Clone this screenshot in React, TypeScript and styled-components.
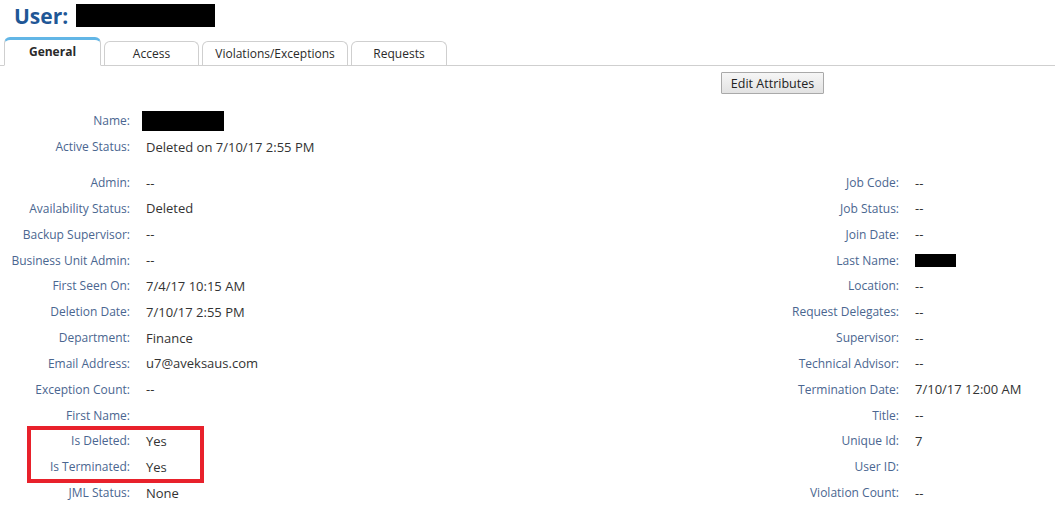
import React from 'react'
import styled, { createGlobalStyle } from 'styled-components'

const GlobalStyle = createGlobalStyle`
  html, body {
    margin: 0;
    padding: 0;
    background: #fff;
  }
  body {
    font-family: "Open Sans", "Noto Sans", sans-serif;
    font-size: 12px;
    color: #333;
  }
`

const Page = styled.div`
  width: 1055px;
  height: 511px;
  overflow: hidden;
`

const TitleRow = styled.div`
  display: flex;
  align-items: center;
  height: 32px;
  padding-left: 14px;
`

const Title = styled.h1`
  margin: 0;
  font-size: 21px;
  font-weight: 700;
  color: #1f5796;
  line-height: 32px;
`

const Redacted = styled.span<{ w: number; h: number; shift?: number }>`
  display: inline-block;
  width: ${(p) => p.w}px;
  height: ${(p) => p.h}px;
  margin-left: ${(p) => p.shift ?? 0}px;
  background: #000;
  vertical-align: middle;
`

const TitleRedact = styled(Redacted)`
  margin-left: 8px;
  margin-top: -1px;
`

const TabBar = styled.div`
  display: flex;
  align-items: flex-end;
  gap: 3px;
  height: 29px;
  margin-top: 4px;
  padding-left: 4px;
  border-bottom: 1px solid #cfcfcf;
`

const Tab = styled.div<{ active?: boolean; w: number }>`
  box-sizing: border-box;
  width: ${(p) => p.w}px;
  height: ${(p) => (p.active ? 29 : 24)}px;
  margin-bottom: ${(p) => (p.active ? -1 : 0)}px;
  display: flex;
  align-items: center;
  justify-content: center;
  border: 1px solid #cfcfcf;
  border-bottom: ${(p) => (p.active ? '1px solid #fff' : 'none')};
  border-top: ${(p) => (p.active ? '3px solid #62b6e6' : '1px solid #cfcfcf')};
  border-radius: 6px 6px 0 0;
  background: #fff;
  font-size: 12px;
  font-weight: ${(p) => (p.active ? 700 : 400)};
  color: #2a2a2a;
  padding-bottom: ${(p) => (p.active ? 3 : 0)}px;
`

const Toolbar = styled.div`
  display: flex;
  padding: 6px 0 0 721px;
  height: 22px;
`

const Button = styled.button`
  box-sizing: border-box;
  width: 103px;
  height: 22px;
  padding: 0;
  border: 1px solid #a9a9a9;
  border-radius: 1px;
  background: linear-gradient(#f6f6f6, #e2e2e2);
  font-family: "Open Sans", "Noto Sans", sans-serif;
  font-size: 12.5px;
  color: #222;
`

const Section = styled.div<{ top: number }>`
  margin-top: ${(p) => p.top}px;
`

const Columns = styled.div`
  display: grid;
  grid-template-columns: 769px 1fr;
`

const Column = styled.div`
  display: flex;
  flex-direction: column;
`

const Row = styled.div`
  display: flex;
  align-items: center;
  height: 25.83px;
`

const Label = styled.div`
  width: 130px;
  text-align: right;
  color: #4a6690;
  white-space: nowrap;
`

const Value = styled.div`
  margin-left: 16px;
  font-size: 13px;
  color: #333;
  white-space: nowrap;
  display: flex;
  align-items: center;
`

const Highlight = styled.div`
  position: relative;
  &::after {
    content: '';
    position: absolute;
    left: 27px;
    top: -2px;
    width: 177px;
    height: 57px;
    box-sizing: border-box;
    border: 4px solid #e8212b;
    pointer-events: none;
  }
`

type Field = [string, React.ReactNode]

const left: Field[] = [
  ['Admin:', '--'],
  ['Availability Status:', 'Deleted'],
  ['Backup Supervisor:', '--'],
  ['Business Unit Admin:', '--'],
  ['First Seen On:', '7/4/17 10:15 AM'],
  ['Deletion Date:', '7/10/17 2:55 PM'],
  ['Department:', 'Finance'],
  ['Email Address:', 'u7@aveksaus.com'],
  ['Exception Count:', '--'],
  ['First Name:', ''],
]

const flagged: Field[] = [
  ['Is Deleted:', 'Yes'],
  ['Is Terminated:', 'Yes'],
]

const right: Field[] = [
  ['Job Code:', '--'],
  ['Job Status:', '--'],
  ['Join Date:', '--'],
  ['Last Name:', <Redacted w={41} h={13} />],
  ['Location:', '--'],
  ['Request Delegates:', '--'],
  ['Supervisor:', '--'],
  ['Technical Advisor:', '--'],
  ['Termination Date:', '7/10/17 12:00 AM'],
  ['Title:', '--'],
  ['Unique Id:', '7'],
  ['User ID:', ''],
  ['Violation Count:', '--'],
]

const FieldRow = ({ f }: { f: Field }) => (
  <Row>
    <Label>{f[0]}</Label>
    <Value>{f[1]}</Value>
  </Row>
)

const tabs = [
  { name: 'General', w: 97, active: true },
  { name: 'Access', w: 95 },
  { name: 'Violations/Exceptions', w: 146 },
  { name: 'Requests', w: 96 },
]

export default function App() {
  return (
    <Page>
      <GlobalStyle />
      <TitleRow>
        <Title>User:</Title>
        <TitleRedact w={139} h={23} />
      </TitleRow>
      <TabBar>
        {tabs.map((t) => (
          <Tab key={t.name} w={t.w} active={t.active}>{t.name}</Tab>
        ))}
      </TabBar>
      <Toolbar>
        <Button>Edit Attributes</Button>
      </Toolbar>
      <Section top={14}>
        <FieldRow f={['Name:', <Redacted w={82} h={20} shift={-4} />]} />
        <FieldRow f={['Active Status:', 'Deleted on 7/10/17 2:55 PM']} />
      </Section>
      <Section top={10}>
        <Columns>
          <Column>
            {left.map((f) => <FieldRow key={f[0]} f={f} />)}
            <Highlight>
              {flagged.map((f) => <FieldRow key={f[0]} f={f} />)}
            </Highlight>
            <FieldRow f={['JML Status:', 'None']} />
          </Column>
          <Column>
            {right.map((f) => <FieldRow key={f[0]} f={f} />)}
          </Column>
        </Columns>
      </Section>
    </Page>
  )
}
